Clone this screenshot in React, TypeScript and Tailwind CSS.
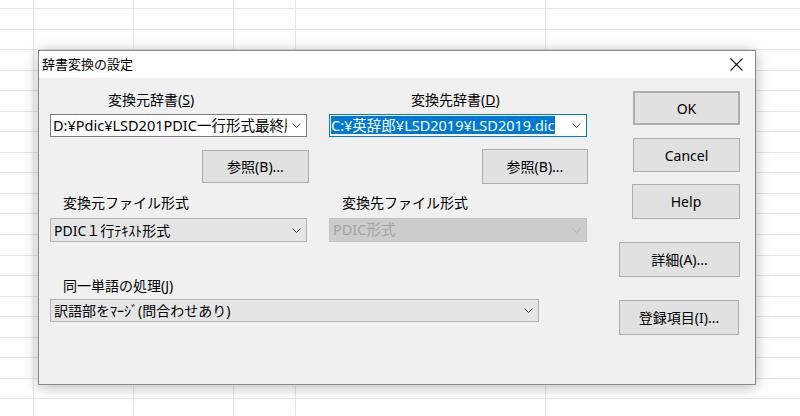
import React from "react";

const Chevron = ({ color = "#404040" }: { color?: string }) => (
  <svg width="9" height="5" viewBox="0 0 9 5" className="shrink-0">
    <path d="M0.5 0.5 L4.5 4.5 L8.5 0.5" fill="none" stroke={color} strokeWidth="1" />
  </svg>
);

const GridRow = ({ first }: { first?: boolean }) => (
  <div className={first ? "flex h-[9px] border-b border-[#e6e6e6]" : "flex h-[20.56px] border-b border-[#e6e6e6]"}>
    <div className="w-[34px] border-r border-[#e6e6e6]" />
    <div className="w-[100px] border-r border-[#e6e6e6]" />
    <div className="w-[100px] border-r border-[#e6e6e6]" />
    <div className="w-[62px] border-r border-[#e6e6e6]" />
    <div className="w-[250px] border-r border-[#e6e6e6]" />
    <div className="flex-1" />
  </div>
);

const Btn = ({ children, cls }: { children: React.ReactNode; cls: string }) => (
  <div className={"flex items-center justify-center bg-[#e1e1e1] border border-[#adadad] text-[14px] text-black " + cls}>
    {children}
  </div>
);

export default function App() {
  const rows = Array.from({ length: 20 });
  return (
    <div className="relative w-[800px] h-[416px] overflow-hidden bg-white font-['Noto_Sans','Noto_Sans_CJK_JP',sans-serif]">
      <div className="flex flex-col">
        <GridRow first />
        {rows.map((_, i) => (
          <GridRow key={i} />
        ))}
      </div>

      <div className="absolute left-[38px] top-[50px] w-[718px] h-[335px] flex flex-col border border-[#8a8a8a] bg-[#f0f0f0] shadow-[0_2px_14px_rgba(0,0,0,0.28)]">
        <div className="h-[27px] bg-white flex items-center justify-between pl-[3px] pr-[12px] text-[13px] text-black">
          <span>辞書変換の設定</span>
          <svg width="13" height="13" viewBox="0 0 13 13">
            <path d="M0.5 0.5 L12.5 12.5 M12.5 0.5 L0.5 12.5" stroke="#1a1a1a" strokeWidth="1.1" fill="none" />
          </svg>
        </div>

        <div className="flex-1 flex pl-[11px] pt-[10px] text-[14px] text-black">
          <div className="w-[538px] flex flex-col">
            <div className="flex gap-[22px]">
              <div className="w-[257px] flex flex-col">
                <div className="h-[23px] flex items-center pl-[58px] whitespace-nowrap">
                  変換元辞書(<span className="underline">S</span>)
                </div>
                <div className="mt-[3px] h-[23px] flex items-center bg-white border border-[#7a7a7a] pr-[5px] text-[14.5px]">
                  <div className="flex-1 overflow-hidden whitespace-nowrap pl-[2px]">D:¥Pdic¥LSD201PDIC一行形式最終版.dic</div>
                  <div className="w-[5px]" />
                  <Chevron />
                </div>
                <Btn cls="mt-[13px] ml-[152px] w-[107px] h-[33px]">参照(B)...</Btn>
              </div>
              <div className="w-[259px] flex flex-col">
                <div className="h-[23px] flex items-center pl-[82px] whitespace-nowrap">
                  変換先辞書(<span className="underline">D</span>)
                </div>
                <div className="mt-[3px] w-[258px] h-[23px] flex items-center bg-white border border-[#0078d7] pr-[5px] text-[14.5px]">
                  <div className="flex-1 overflow-hidden whitespace-nowrap pl-[1px]">
                    <span className="bg-[#0078d7] text-white inline-block h-[18px] leading-[18px]">C:¥英辞郎¥LSD2019¥LSD2019.dic</span>
                  </div>
                  <Chevron />
                </div>
                <Btn cls="mt-[12px] ml-[153px] w-[106px] h-[35px]">参照(B)...</Btn>
              </div>
            </div>

            <div className="flex gap-[22px] mt-[9px]">
              <div className="w-[257px] flex flex-col">
                <div className="h-[22px] flex items-center pl-[13px] pb-[4px] whitespace-nowrap">変換元ファイル形式</div>
                <div className="mt-[3px] h-[24px] flex items-center bg-[#e5e5e5] border border-[#b3b3b3] pr-[5px] text-[14px]">
                  <div className="flex-1 overflow-hidden whitespace-nowrap pl-[3px]">PDIC１行ﾃｷｽﾄ形式</div>
                  <Chevron />
                </div>
              </div>
              <div className="w-[258px] flex flex-col">
                <div className="h-[22px] flex items-center pl-[13px] pb-[4px] whitespace-nowrap">変換先ファイル形式</div>
                <div className="mt-[3px] h-[24px] flex items-center bg-[#cccccc] border border-[#c2c2c2] pr-[5px] text-[14.5px]">
                  <div className="flex-1 overflow-hidden whitespace-nowrap pl-[3px] text-[#a3a3a3]">PDIC形式</div>
                  <Chevron color="#b0b0b0" />
                </div>
              </div>
            </div>

            <div className="flex flex-col mt-[34px]">
              <div className="h-[22px] flex items-center pl-[13px] pb-[4px] whitespace-nowrap">
                同一単語の処理(<span className="underline">J</span>)
              </div>
              <div className="mt-[1px] w-[489px] h-[23px] flex items-center bg-[#e5e5e5] border border-[#b3b3b3] pr-[5px] text-[14px]">
                <div className="flex-1 overflow-hidden whitespace-nowrap pl-[3px]">訳語部をﾏｰｼﾞ(問合わせあり)</div>
                <Chevron />
              </div>
            </div>
          </div>

          <div className="ml-[31px] w-[121px] flex flex-col items-end">
            <Btn cls="mt-[3px] w-[107px] h-[34px] border-2 border-[#0078d7]">OK</Btn>
            <Btn cls="mt-[13px] w-[107px] h-[34px]">Cancel</Btn>
            <Btn cls="mt-[12px] w-[108px] h-[35px]">Help</Btn>
            <Btn cls="mt-[23px] w-[121px] h-[35px]">詳細(A)...</Btn>
            <Btn cls="mt-[23px] w-[120px] h-[35px] mr-[1px]">登録項目(I)...</Btn>
          </div>
        </div>
      </div>
    </div>
  );
}
